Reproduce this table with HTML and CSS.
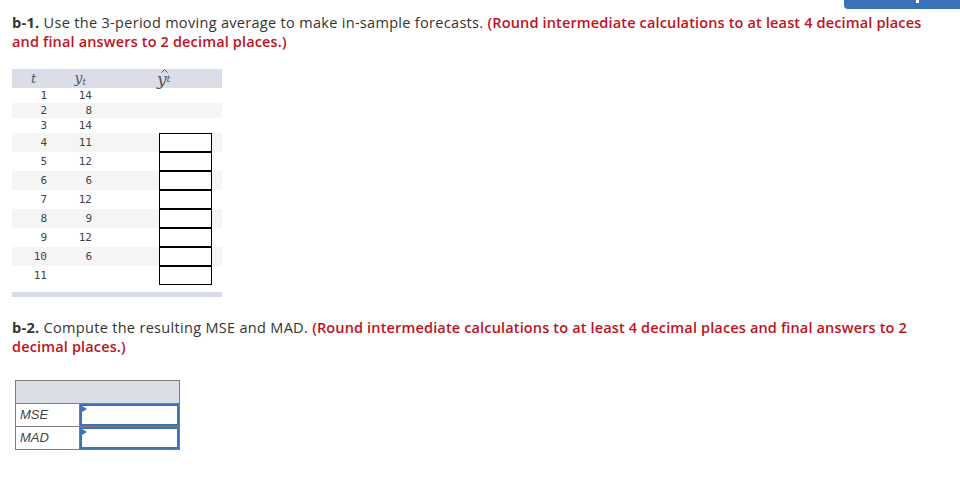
FILE: index.html
```html
<!DOCTYPE html>
<html>
<head>
<meta charset="utf-8">
<link rel="stylesheet" href="styles.css">
</head>
<body>
<div class="topbtn"><span class="btn-glyph"></span></div>
<div class="page">
  <p class="q"><b>b-1.</b> Use the 3-period moving average to make in-sample forecasts. <span class="red">(Round intermediate calculations to at least 4 decimal places and final answers to 2 decimal places.)</span></p>

  <div class="ftable">
    <div class="row head">
      <div class="c1 hc">t</div>
      <div class="c2 hc">y<sub>t</sub></div>
      <div class="c3 hc"><span class="hat">y<svg class="hatmark" width="7" height="4" viewBox="0 0 7 4"><path d="M0.5 3.5 L3.5 0.7 L6.5 3.5" fill="none" stroke="#555" stroke-width="1"/></svg></span><sub>t</sub></div>
    </div>
    <div class="row short"><div class="c1">1</div><div class="c2">14</div><div class="c3"></div></div>
    <div class="row short alt"><div class="c1">2</div><div class="c2">8</div><div class="c3"></div></div>
    <div class="row short"><div class="c1">3</div><div class="c2">14</div><div class="c3"></div></div>
    <div class="row tall alt"><div class="c1">4</div><div class="c2">11</div><div class="c3"><div class="box"></div></div></div>
    <div class="row tall"><div class="c1">5</div><div class="c2">12</div><div class="c3"><div class="box"></div></div></div>
    <div class="row tall alt"><div class="c1">6</div><div class="c2">6</div><div class="c3"><div class="box"></div></div></div>
    <div class="row tall"><div class="c1">7</div><div class="c2">12</div><div class="c3"><div class="box"></div></div></div>
    <div class="row tall alt"><div class="c1">8</div><div class="c2">9</div><div class="c3"><div class="box"></div></div></div>
    <div class="row tall"><div class="c1">9</div><div class="c2">12</div><div class="c3"><div class="box"></div></div></div>
    <div class="row tall alt"><div class="c1">10</div><div class="c2">6</div><div class="c3"><div class="box"></div></div></div>
    <div class="row tall"><div class="c1">11</div><div class="c2"></div><div class="c3"><div class="box"></div></div></div>
    <div class="fbar"></div>
  </div>

  <p class="q q2"><b>b-2.</b> Compute the resulting MSE and MAD. <span class="red">(Round intermediate calculations to at least 4 decimal places and final answers to 2 decimal places.)</span></p>

  <div class="mtable">
    <div class="mhead"></div>
    <div class="mrow">
      <div class="mlabel">MSE</div>
      <div class="minput"><span class="tri"></span></div>
    </div>
    <div class="mrow">
      <div class="mlabel">MAD</div>
      <div class="minput"><span class="tri"></span></div>
    </div>
  </div>
</div>
</body>
</html>
```

FILE: styles.css
```css
html, body {
  margin: 0;
  padding: 0;
  background: #fff;
}
body {
  font-family: "Open Sans", Lato, sans-serif;
  color: #333;
}
.topbtn {
  position: absolute;
  left: 844px;
  top: 0;
  width: 116px;
  height: 9px;
  background: #3a73b9;
  border-bottom-left-radius: 4px;
}
.btn-glyph {
  position: absolute;
  left: 72px;
  top: 0;
  width: 3px;
  height: 3px;
  background: #fff;
}
.page {
  padding: 13px 12px 0 12px;
}
.q {
  margin: 0;
  font-size: 14.5px;
  line-height: 19px;
  width: 930px;
  letter-spacing: 0.31px;
}
.q b {
  font-weight: 700;
}
.red {
  color: #c1121c;
  font-weight: 600;
  letter-spacing: 0.15px;
}
.ftable {
  margin-top: 18px;
  width: 210px;
  font-family: "DejaVu Sans Mono", "Liberation Mono", monospace;
  font-size: 11px;
  color: #444;
}
.row {
  display: flex;
  align-items: center;
}
.row.short { height: 15px; }
.row.tall { height: 19px; }
.row.alt { background: #f5f5f5; }
.row.head {
  height: 19px;
  background: #dbdee8;
}
.c1 {
  width: 35px;
  text-align: right;
  padding-right: 8px;
}
.c2 {
  width: 37px;
  text-align: right;
  padding-right: 8px;
}
.c3 {
  flex: 1;
  padding-left: 59px;
  height: 100%;
}
.box {
  width: 51px;
  height: 17px;
  border: 1px solid #000;
  background: #fff;
}
.hc {
  font-family: "DejaVu Serif", "Liberation Serif", serif;
  font-style: italic;
  font-size: 13px;
  color: #555;
}
.head .c1 {
  width: 27px;
  text-align: center;
  padding-left: 8px;
}
.head .c2 {
  text-align: right;
  padding-right: 14px;
  width: 31px;
  font-size: 14px;
}
.head .c3 {
  padding-left: 57px;
  display: flex;
  align-items: center;
  font-size: 17px;
}
.hc sub {
  font-size: 9px;
  vertical-align: -2px;
}
.head .c3 sub {
  font-size: 10px;
  vertical-align: -3px;
}
.hat {
  position: relative;
}
.hatmark {
  position: absolute;
  left: 4px;
  top: 0px;
}
.fbar {
  margin-top: 7px;
  height: 5px;
  background: #d7dbe6;
}
.q2 {
  margin-top: 21px;
}
.mtable {
  margin-top: 24px;
  margin-left: 3px;
  width: 163px;
  border: 1px solid #7d7d7d;
  font-family: "Liberation Sans", Arial, sans-serif;
}
.mhead {
  height: 22px;
  background: #d9dde6;
  border-bottom: 1px solid #7d7d7d;
}
.mrow {
  display: flex;
  height: 22px;
}
.mrow + .mrow {
  border-top: 1px solid #7d7d7d;
}
.mlabel {
  width: 59px;
  padding-left: 4px;
  border-right: 1px solid #7d7d7d;
  font-style: italic;
  font-size: 13px;
  line-height: 22px;
  color: #444;
}
.minput {
  flex: 1;
  border: 2px solid #3f72b8;
  position: relative;
  background: #fff;
}
.tri {
  position: absolute;
  left: 0;
  top: 0;
  width: 0;
  height: 0;
  border-top: 3px solid transparent;
  border-bottom: 3px solid transparent;
  border-left: 5px solid #3f72b8;
}
```
